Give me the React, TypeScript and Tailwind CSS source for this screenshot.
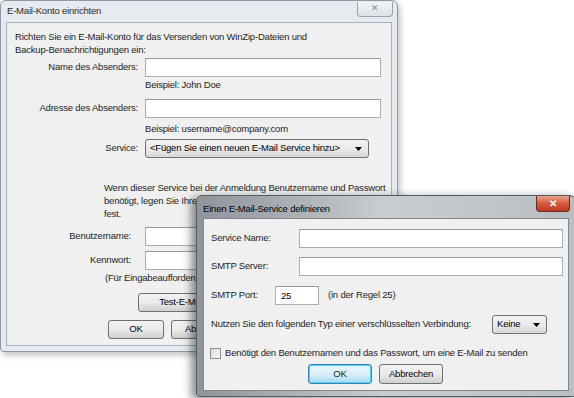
import React from 'react'

const font = { fontFamily: '"Liberation Sans", Arial, sans-serif' }

function Input({ className = '', children }: { className?: string; children?: React.ReactNode }) {
  return (
    <div
      className={`h-[19px] border border-[#abadb3] border-t-[#9a9ca2] bg-white px-[5px] leading-[17px] text-black ${className}`}
    >
      {children}
    </div>
  )
}

function Button({ label, className = '' }: { label: string; className?: string }) {
  return (
    <div
      className={`flex h-[19px] items-center justify-center rounded-[3px] border border-[#707070] bg-gradient-to-b from-[#f2f2f2] via-[#ebebeb] to-[#cfcfcf] text-black ${className}`}
    >
      {label}
    </div>
  )
}

function Select({ label, className = '' }: { label: string; className?: string }) {
  return (
    <div
      className={`flex h-[19px] items-center justify-between rounded-[3px] border border-[#707070] bg-gradient-to-b from-[#f2f2f2] via-[#ebebeb] to-[#d8d8d8] pl-[4px] pr-[6px] text-black ${className}`}
    >
      <span>{label}</span>
      <svg width="7" height="4" viewBox="0 0 7 4">
        <path d="M0 0h7L3.5 4z" fill="#000" />
      </svg>
    </div>
  )
}

function Row({ label, labelW, children }: { label: string; labelW: string; children: React.ReactNode }) {
  return (
    <div className="flex items-center">
      <div className={`${labelW} text-right`}>{label}</div>
      {children}
    </div>
  )
}

export default function App() {
  return (
    <div
      className="relative h-[398px] w-[574px] overflow-hidden whitespace-nowrap bg-white text-[9.5px] tracking-[-0.2px] text-[#1e1e1e]"
      style={font}
    >
      {/* Back window */}
      <div className="absolute left-0 top-0 flex h-[352px] w-[398px] flex-col rounded-t-[6px] rounded-b-[4px] border border-[#8e97a2] bg-[#e7ebef] shadow-[2px_3px_6px_rgba(0,0,0,0.25)]">
        <div className="flex h-[21px] items-center justify-between pl-[6px] pr-[4px]">
          <span className="text-[#2a2a2a]">E-Mail-Konto einrichten</span>
          <div className="mt-[1px] flex h-[15px] w-[36px] items-center justify-center self-start rounded-b-[4px] border border-[#9aa3ad] border-t-0 bg-gradient-to-b from-[#f1f3f5] to-[#dde2e7] text-[9px] text-[#8a9098]">
            ✕
          </div>
        </div>
        <div className="mx-[5px] mb-[5px] flex-1 border border-[#a9b1ba] bg-[#f0f0f0] pl-[8px] pt-[7px]">
          <div className="leading-[13px]">
            Richten Sie ein E-Mail-Konto für das Versenden von WinZip-Dateien und
            <br />
            Backup-Benachrichtigungen ein:
          </div>
          <div className="mt-[2px] flex flex-col">
            <Row label="Name des Absenders:" labelW="w-[123px]">
              <Input className="ml-[7px] w-[236px]" />
            </Row>
            <div className="pl-[130px] leading-[15px]">Beispiel: John Doe</div>
            <div className="mt-[7px]">
              <Row label="Adresse des Absenders:" labelW="w-[123px]">
                <Input className="ml-[7px] w-[236px]" />
              </Row>
            </div>
            <div className="mt-[3px] pl-[130px] leading-[15px]">Beispiel: username@company.com</div>
            <div className="mt-[3px]">
              <Row label="Service:" labelW="w-[123px]">
                <Select label="<Fügen Sie einen neuen E-Mail Service hinzu>" className="ml-[7px] w-[224px]" />
              </Row>
            </div>
            <div className="mt-[23px] pl-[89px] leading-[13px]">
              Wenn dieser Service bei der Anmeldung Benutzername und Passwort
              <br />
              benötigt, legen Sie Ihre Anmeldeinformationen hier
              <br />
              fest.
            </div>
            <div className="mt-[7px]">
              <Row label="Benutzername:" labelW="w-[116px]">
                <Input className="ml-[14px] w-[236px]" />
              </Row>
            </div>
            <div className="mt-[5px]">
              <Row label="Kennwort:" labelW="w-[116px]">
                <Input className="ml-[14px] w-[236px]" />
              </Row>
            </div>
            <div className="pl-[90px] leading-[15px]">(Für Eingabeaufforderung leer lassen)</div>
            <Button label="Test-E-Mail senden" className="ml-[123px] mt-[8px] h-[18px] w-[120px]" />
            <div className="mt-[8px] flex gap-[7px] pl-[93px]">
              <Button label="OK" className="w-[56px]" />
              <Button label="Abbrechen" className="w-[72px]" />
            </div>
          </div>
        </div>
      </div>

      {/* Front window */}
      <div className="absolute left-[196px] top-[195px] flex h-[202px] w-[380px] flex-col rounded-t-[6px] rounded-b-[3px] border border-[#545d66] bg-gradient-to-r from-[#8e949a] via-[#c9cdd1] to-[#b9bec3] shadow-[-5px_2px_8px_rgba(0,0,0,0.45)]">
        <div className="flex h-[22px] items-center justify-between pl-[6px] pr-[5px]">
          <span className="mt-[5px] text-black">Einen E-Mail-Service definieren</span>
          <div className="flex h-[16px] w-[34px] items-center justify-center self-start rounded-b-[4px] border border-[#6e2a20] border-t-0 bg-gradient-to-b from-[#e8a290] via-[#d45a3e] to-[#c0391f] text-[10px] font-bold text-white">
            ✕
          </div>
        </div>
        <div className="mx-[6px] mb-[5px] flex-1 border border-[#7f8891] bg-[#f0f0f0] pl-[7px] pr-[4px]">
          <div className="mt-[10px] flex items-center">
            <div className="w-[88px]">Service Name:</div>
            <Input className="w-[264px] border-[#7eb4ea] border-t-[#5c93c6]" />
          </div>
          <div className="mt-[9px] flex items-center">
            <div className="w-[88px]">SMTP Server:</div>
            <Input className="w-[264px]" />
          </div>
          <div className="mt-[10px] flex items-center">
            <div className="w-[64px]">SMTP Port:</div>
            <Input className="w-[44px]">25</Input>
            <div className="ml-[9px]">(in der Regel 25)</div>
          </div>
          <div className="mt-[10px] flex items-center">
            <div className="w-[281px]">Nutzen Sie den folgenden Typ einer verschlüsselten Verbindung:</div>
            <Select label="Keine" className="h-[18px] w-[55px]" />
          </div>
          <div className="mt-[12px] flex items-center">
            <div className="-ml-[1px] h-[11px] w-[11px] border border-[#8f8f8f] bg-gradient-to-br from-[#dcdcdc] to-[#f8f8f8]" />
            <div className="ml-[4px]">Benötigt den Benutzernamen und das Passwort, um eine E-Mail zu senden</div>
          </div>
          <div className="mt-[4px] flex gap-[7px] pl-[97px]">
            <div className="flex h-[20px] w-[64px] items-center justify-center rounded-[3px] border border-[#3c7fb1] bg-gradient-to-b from-[#eaf6fd] via-[#d9f0fc] to-[#a7d9f5] shadow-[inset_0_0_0_1px_#48d5fb]">
              OK
            </div>
            <Button label="Abbrechen" className="h-[20px] w-[64px]" />
          </div>
        </div>
      </div>
    </div>
  )
}
